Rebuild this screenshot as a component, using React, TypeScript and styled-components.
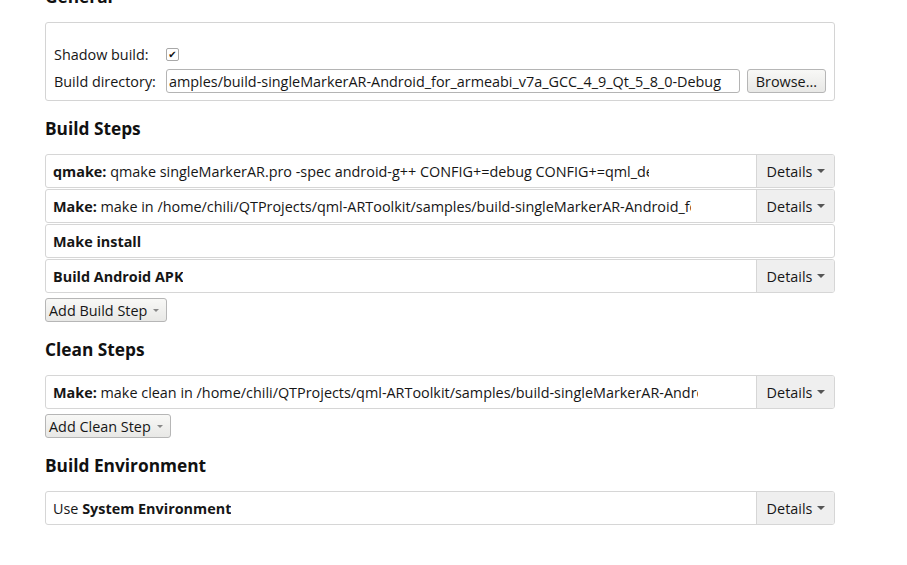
import React from "react";
import styled, { createGlobalStyle } from "styled-components";

const GlobalStyle = createGlobalStyle`
  *, *::before, *::after {
    box-sizing: border-box;
  }
  html, body {
    margin: 0;
    padding: 0;
    background: #ffffff;
    overflow: hidden;
  }
  body {
    font-family: "Open Sans", "DejaVu Sans", sans-serif;
    font-size: 14.4px;
    color: #161616;
  }
`;

const Page = styled.div`
  width: 790px;
  margin-left: 45px;
  margin-top: -14px;
`;

const Heading = styled.h2`
  margin: 0 0 14px 0;
  height: 22px;
  line-height: 22px;
  font-size: 17.3px;
  font-weight: 700;
  color: #111;
`;

const Section = styled.section`
  margin-bottom: 17px;
`;

const GroupBox = styled.div`
  border: 1px solid #d4d4d4;
  border-radius: 3px;
  padding: 23px 8px 7px 8px;
  display: grid;
  grid-template-columns: 112px 1fr;
  grid-template-rows: 16px 24px;
  row-gap: 7px;
  align-items: center;
`;

const FieldLabel = styled.label`
  white-space: nowrap;
`;

const CheckBox = styled.span`
  width: 13px;
  height: 13px;
  border: 1px solid #a8a8a8;
  border-radius: 2px;
  background: #fff;
  display: flex;
  align-items: center;
  justify-content: center;
  font-size: 10px;
  line-height: 1;
  color: #111;
`;

const DirRow = styled.div`
  display: flex;
  gap: 7px;
  height: 24px;
`;

const PathInput = styled.div`
  flex: 1;
  border: 1px solid #b4b4b4;
  border-radius: 3px;
  background: #fff;
  padding: 0 2px;
  display: flex;
  align-items: center;
  overflow: hidden;
  white-space: nowrap;
`;

const PushButton = styled.button`
  font: inherit;
  color: #161616;
  height: 24px;
  padding: 0 8px;
  border: 1px solid #b6b6b6;
  border-radius: 3px;
  background: linear-gradient(#f8f8f6, #e8e8e6);
  display: inline-flex;
  align-items: center;
  gap: 6px;
  cursor: default;
`;

const Arrow = styled.span<{ $dark?: boolean }>`
  width: 0;
  height: 0;
  border-left: ${(p) => (p.$dark ? 4 : 3)}px solid transparent;
  border-right: ${(p) => (p.$dark ? 4 : 3)}px solid transparent;
  border-top: ${(p) => (p.$dark ? 4 : 3)}px solid ${(p) => (p.$dark ? "#555" : "#888")};
`;

const StepList = styled.div`
  display: flex;
  flex-direction: column;
  gap: 1px;
`;

const StepRow = styled.div`
  height: 34px;
  border: 1px solid #d6d6d6;
  border-radius: 3px;
  background: #fff;
  display: flex;
  align-items: stretch;
  overflow: hidden;
`;

const StepLabel = styled.div<{ $clip?: number }>`
  flex: 1;
  min-width: 0;
  display: flex;
  align-items: center;
  padding-left: 7px;
  white-space: nowrap;
  overflow: hidden;
  & > span {
    display: block;
    overflow: hidden;
    max-width: ${(p) => (p.$clip ? `${p.$clip}px` : "none")};
  }
  b {
    font-weight: 700;
  }
`;

const DetailsButton = styled.div`
  flex: 0 0 78px;
  border-left: 1px solid #d6d6d6;
  background: #efefef;
  display: flex;
  align-items: center;
  justify-content: center;
  gap: 5px;
  padding-left: 1px;
  white-space: nowrap;
`;

const AddButtonRow = styled.div`
  margin-top: 5px;
  & > button {
    padding: 0 7px 0 3px;
  }
`;

type Step = { title: string; text?: string; clip?: number; details?: boolean };

const buildSteps: Step[] = [
  {
    title: "qmake:",
    text: " qmake singleMarkerAR.pro -spec android-g++ CONFIG+=debug CONFIG+=qml_debug",
    clip: 596,
    details: true,
  },
  {
    title: "Make:",
    text: " make in /home/chili/QTProjects/qml-ARToolkit/samples/build-singleMarkerAR-Android_for_armeabi_v7a_GCC_4_9_Qt_5_8_0-Debug",
    clip: 638,
    details: true,
  },
  { title: "Make install" },
  { title: "Build Android APK", details: true },
];

const cleanSteps: Step[] = [
  {
    title: "Make:",
    text: " make clean in /home/chili/QTProjects/qml-ARToolkit/samples/build-singleMarkerAR-Android_for_armeabi_v7a_GCC_4_9_Qt_5_8_0-Debug",
    clip: 645,
    details: true,
  },
];

const StepItem: React.FC<{ step: Step }> = ({ step }) => (
  <StepRow>
    <StepLabel $clip={step.clip}>
      <span>
        <b>{step.title}</b>
        {step.text}
      </span>
    </StepLabel>
    {step.details && (
      <DetailsButton>
        Details <Arrow $dark />
      </DetailsButton>
    )}
  </StepRow>
);

const App: React.FC = () => {
  return (
    <>
      <GlobalStyle />
      <Page>
        <Section>
          <Heading>General</Heading>
          <GroupBox>
            <FieldLabel>Shadow build:</FieldLabel>
            <CheckBox>✔</CheckBox>
            <FieldLabel>Build directory:</FieldLabel>
            <DirRow>
              <PathInput>amples/build-singleMarkerAR-Android_for_armeabi_v7a_GCC_4_9_Qt_5_8_0-Debug</PathInput>
              <PushButton>Browse...</PushButton>
            </DirRow>
          </GroupBox>
        </Section>

        <Section>
          <Heading>Build Steps</Heading>
          <StepList>
            {buildSteps.map((s, i) => (
              <StepItem key={i} step={s} />
            ))}
          </StepList>
          <AddButtonRow>
            <PushButton>
              Add Build Step <Arrow />
            </PushButton>
          </AddButtonRow>
        </Section>

        <Section>
          <Heading>Clean Steps</Heading>
          <StepList>
            {cleanSteps.map((s, i) => (
              <StepItem key={i} step={s} />
            ))}
          </StepList>
          <AddButtonRow>
            <PushButton>
              Add Clean Step <Arrow />
            </PushButton>
          </AddButtonRow>
        </Section>

        <Section>
          <Heading>Build Environment</Heading>
          <StepList>
            <StepRow>
              <StepLabel>
                <span>
                  Use <b>System Environment</b>
                </span>
              </StepLabel>
              <DetailsButton>
                Details <Arrow $dark />
              </DetailsButton>
            </StepRow>
          </StepList>
        </Section>
      </Page>
    </>
  );
};

export default App;
